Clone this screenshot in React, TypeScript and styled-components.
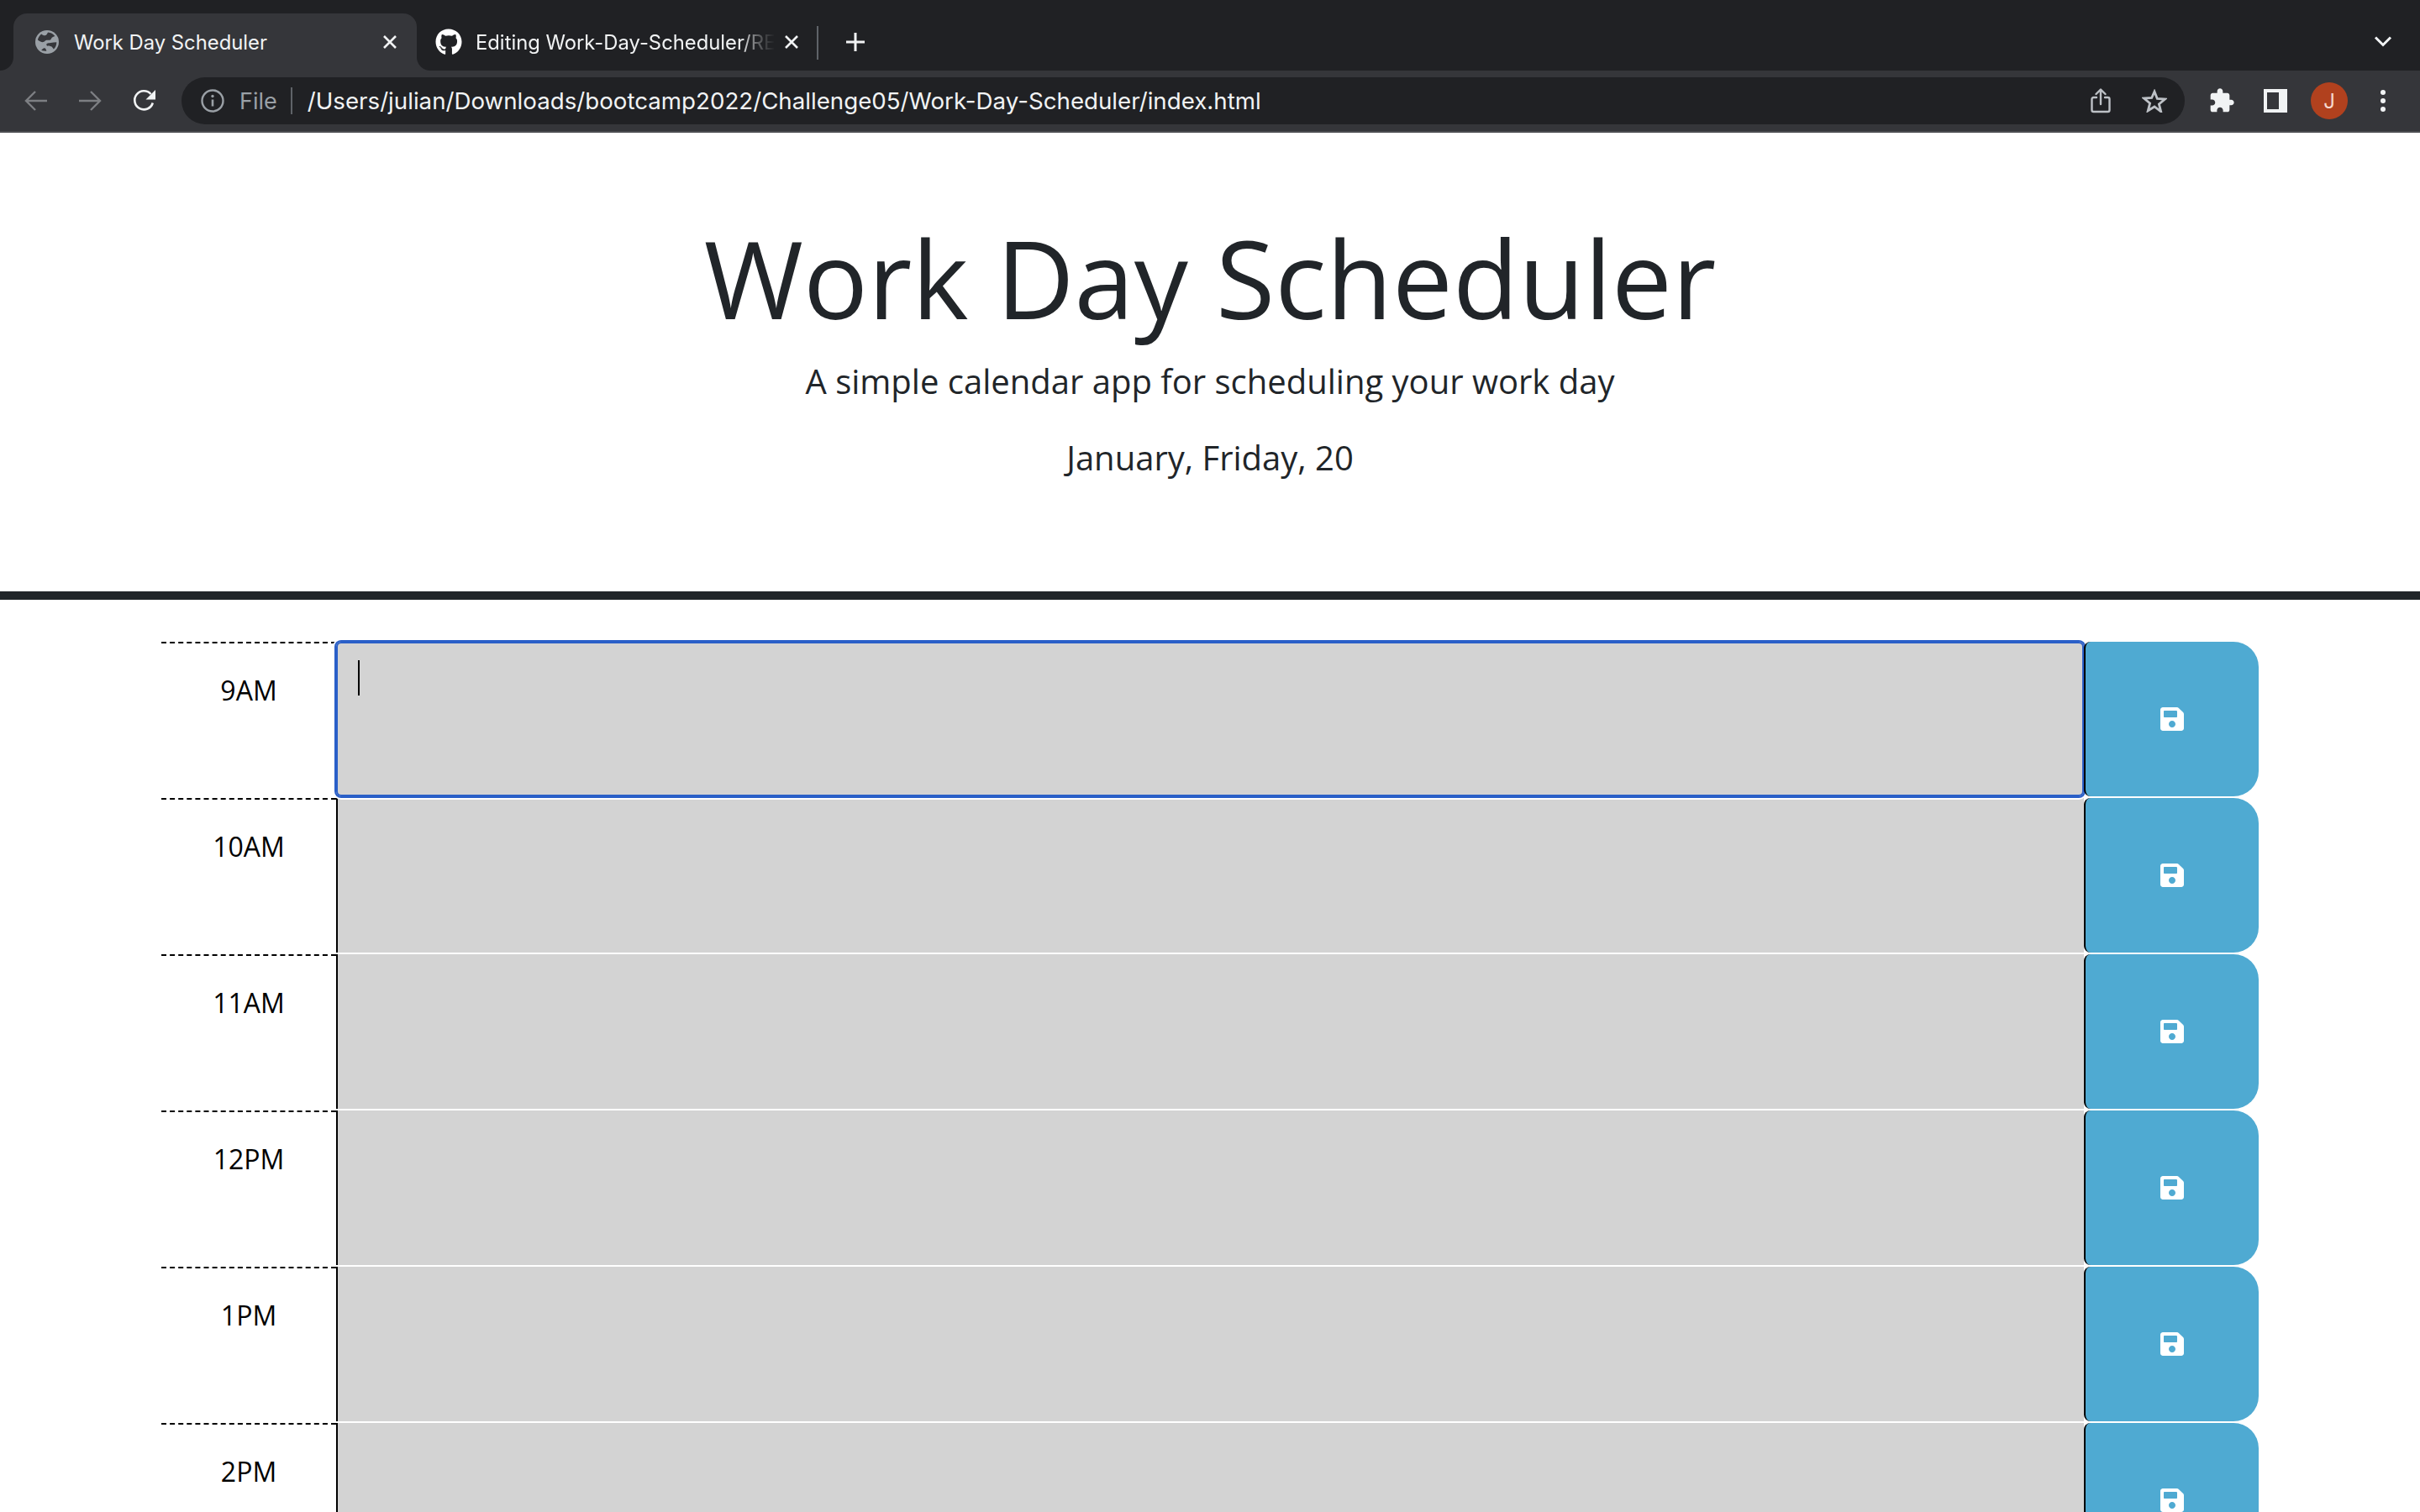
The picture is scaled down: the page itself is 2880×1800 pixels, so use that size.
import React from "react";
import styled, { createGlobalStyle } from "styled-components";
import { FaSave, FaGithub } from "react-icons/fa";

const Global = createGlobalStyle`
  html, body { margin: 0; padding: 0; height: 1800px; overflow: hidden; background: #fff; }
  * { box-sizing: border-box; }
`;

const Page = styled.div`
  width: 2880px;
  height: 1800px;
  overflow: hidden;
`;

const TabStrip = styled.div`
  height: 84px;
  background: #202124;
  display: flex;
  align-items: flex-end;
  padding-left: 16px;
  padding-right: 12px;
  font-family: Inter, "Liberation Sans", sans-serif;
  font-size: 23.8px;
  color: #f1f3f4;
`;

const ActiveTab = styled.div`
  position: relative;
  width: 480px;
  height: 68px;
  background: #35363a;
  border-radius: 16px 16px 0 0;
  display: flex;
  align-items: center;
  padding-left: 26px;
  &::before, &::after {
    content: "";
    position: absolute;
    bottom: 0;
    width: 16px;
    height: 16px;
  }
  &::before {
    left: -16px;
    background: radial-gradient(circle at 0 0, #202124 15.5px, #35363a 16.5px);
  }
  &::after {
    right: -16px;
    background: radial-gradient(circle at 100% 0, #202124 15.5px, #35363a 16.5px);
  }
`;

const IdleTab = styled.div`
  width: 476px;
  height: 68px;
  display: flex;
  align-items: center;
  padding-left: 24px;
`;

const Favicon = styled.span`
  width: 28px;
  height: 28px;
  flex: none;
  display: flex;
  color: #fff;
`;

const GithubMark = styled(FaGithub)`
  width: 32px;
  height: 32px;
  margin: -2px;
  flex: none;
`;

const TabTitle = styled.span<{ $fade?: boolean }>`
  width: 358px;
  margin-left: 18px;
  white-space: nowrap;
  overflow: hidden;
  flex: none;
  ${(p) =>
    p.$fade &&
    "mask-image: linear-gradient(to right, #000 calc(100% - 42px), rgba(0,0,0,0.35) calc(100% - 24px), transparent calc(100% - 2px));"}
`;

const CloseSlot = styled.span`
  width: 24px;
  height: 24px;
  flex: none;
  display: flex;
  margin-left: 6px;
`;

const TabDivider = styled.span`
  width: 2px;
  height: 40px;
  background: #5f6368;
  flex: none;
  margin-bottom: 13px;
`;

const NewTab = styled.span`
  width: 28px;
  height: 28px;
  flex: none;
  display: flex;
  margin: 0 0 20px 30px;
`;

const StripSpacer = styled.span`
  flex: 1;
`;

const TabListButton = styled.span`
  width: 24px;
  height: 24px;
  display: flex;
  flex: none;
  margin-right: 20px;
  margin-bottom: 22px;
`;

const Toolbar = styled.div`
  height: 74px;
  background: #35363a;
  border-bottom: 2px solid #4b4c50;
  display: flex;
  align-items: center;
  padding: 0 12px 0 11px;
  font-family: Inter, "Liberation Sans", sans-serif;
`;

const NavSlot = styled.span`
  width: 64px;
  height: 56px;
  flex: none;
  display: flex;
  align-items: center;
  justify-content: center;
`;

const ReloadSlot = styled(NavSlot)`
  padding-left: 2px;
`;

const Omnibox = styled.div`
  flex: 1;
  height: 56px;
  margin: 0 12px 0 13px;
  background: #202124;
  border-radius: 28px;
  display: flex;
  align-items: center;
  padding: 0 4px 0 23px;
`;

const SchemeLabel = styled.span`
  margin-left: 18px;
  font-size: 27px;
  color: #9aa0a6;
`;

const OmniDivider = styled.span`
  width: 2px;
  height: 32px;
  margin-left: 16px;
  background: #5f6368;
  flex: none;
`;

const Url = styled.span`
  margin-left: 18px;
  font-size: 27.7px;
  color: #f1f3f4;
  white-space: nowrap;
  flex: 1;
`;

const Avatar = styled.span`
  width: 44px;
  height: 44px;
  border-radius: 50%;
  background: #b1411e;
  color: #f6d9cf;
  font-size: 24px;
  display: flex;
  align-items: center;
  justify-content: center;
`;

const Hero = styled.header`
  height: 556px;
  border-bottom: 10px solid #212529;
  padding-top: 96px;
  text-align: center;
  font-family: "Open Sans", sans-serif;
  color: #212529;
`;

const Title = styled.h1`
  margin: 0 0 16px;
  font-size: 128px;
  line-height: 154px;
  font-weight: 400;
`;

const Lede = styled.p`
  margin: 0 0 31px;
  font-size: 40px;
  line-height: 60px;
  font-weight: 400;
`;

const Today = styled.p`
  margin: 0;
  font-size: 40px;
  line-height: 60px;
  font-weight: 400;
`;

const Schedule = styled.main`
  width: 2496px;
  margin: 50px auto 0;
  font-family: "Open Sans", sans-serif;
`;

const HourRow = styled.section`
  display: grid;
  grid-template-columns: 208px 2080px 208px;
  height: 186px;
`;

const HourLabel = styled.div`
  border-top: 2px dashed #000;
  padding-top: 32px;
  font-size: 32px;
  line-height: 48px;
  text-align: center;
  color: #000;
`;

const EventField = styled.div<{ $focused?: boolean }>`
  position: relative;
  height: 184px;
  background: #d3d3d3;
  border-left: 2px solid #000;
  padding: 22px 24px;
  ${(p) =>
    p.$focused &&
    `
    z-index: 1;
    border-left: 0;
    border-radius: 6px;
    padding-left: 26px;
    box-shadow: inset 0 0 0 2px #2a5fc8, 0 0 0 2px #2a5fc8, 0 0 0 4px #fff;
  `}
`;

const Caret = styled.span`
  display: block;
  width: 2px;
  height: 42px;
  background: #000;
`;

const SaveButton = styled.button`
  position: relative;
  z-index: 2;
  height: 184px;
  border: 0;
  border-left: 2px solid #000;
  border-radius: 8px 30px 30px 8px;
  background: #4faad2;
  color: #fff;
  padding: 0;
  display: flex;
  align-items: center;
  justify-content: center;
`;

const hours = ["9AM", "10AM", "11AM", "12PM", "1PM", "2PM"];

const Close = () => (
  <svg width="24" height="24" viewBox="0 0 24 24" fill="none" stroke="#f1f3f4" strokeWidth="2.6">
    <path d="M5 5l14 14M19 5L5 19" />
  </svg>
);

const Globe = () => (
  <svg width="28" height="28" viewBox="0 0 28 28">
    <circle cx="14" cy="14" r="14" fill="#9aa0a6" />
    <path
      fill="#35363a"
      d="M15 2.600c3.400.3 6.400 1.900 8.400 4.300-1.200.4-2.600.9-3.600 1.800-.9.9-.8 2.200-2 2.800-1.500.7-3.500-.3-5.100.4-1.300.6-2 2-3.400 2.200-1.700.2-3.500-.5-6.400-2.500.5-2.900 2.100-5.500 4.300-7.200 1.200 1 2.500 1.900 4.100 1.900 1.700-.1 2.800-1.200 3.700-3.700z"
    />
    <path
      fill="#35363a"
      d="M25.300 14.200c.1 3.300-1.300 6.300-3.500 8.400-.8-1.200-1.500-2.700-2.900-3.300-1.500-.7-3.300-.1-4.800-.9-1-.5-1.100-1.800-.3-2.500 1.200-1 3-.6 4.500-.9 2.400-.4 4.700-.7 7-.8z"
    />
    <path
      fill="#35363a"
      d="M7.200 24c1.100-1.300 2.100-2.900 3.800-2.800 1.300.1 1.700 1.600 2.400 3.500-2.300.1-4.400-.3-6.200-.7z"
    />
  </svg>
);

const Arrow = ({ flip }: { flip?: boolean }) => (
  <svg width="28" height="28" viewBox="0 0 28 28" fill="none" stroke="#7d7f83" strokeWidth="2.4">
    <path d={flip ? "M1 14h25M15 3l11 11-11 11" : "M27 14H2M13 3L2 14l11 11"} />
  </svg>
);

const Reload = () => (
  <svg width="28" height="28" viewBox="0 0 28 28" fill="none">
    <path d="M23.800 16.500A11 11 0 1 1 21.500 6" stroke="#f1f3f4" strokeWidth="2.6" />
    <path d="M27 1v11.500H15.500z" fill="#f1f3f4" />
  </svg>
);

const Info = () => (
  <svg width="28" height="28" viewBox="0 0 28 28" fill="none">
    <circle cx="14" cy="14" r="12.500" stroke="#9aa0a6" strokeWidth="2.4" />
    <path d="M14 12.500v8" stroke="#9aa0a6" strokeWidth="2.6" />
    <circle cx="14" cy="8.500" r="1.700" fill="#9aa0a6" />
  </svg>
);

const Share = () => (
  <svg width="24" height="30" viewBox="0 0 24 30" fill="none" stroke="#bdc1c6" strokeWidth="2.4" strokeLinecap="round" strokeLinejoin="round">
    <path d="M12 19V2M6.500 7L12 1.500 17.500 7" />
    <path d="M7 11H3.500A2 2 0 0 0 1.500 13v13a2 2 0 0 0 2 2h17a2 2 0 0 0 2-2V13a2 2 0 0 0-2-2H17" />
  </svg>
);

const Star = () => (
  <svg width="30" height="28" viewBox="0 0 30 28" fill="none" stroke="#bdc1c6" strokeWidth="2.8" strokeLinejoin="miter">
    <path d="M15 3l3.300 8.500 9.200.6-7.100 5.800 2.300 8.900L15 21l-7.700 4.800 2.300-8.900-7.100-5.800 9.200-.6z" />
  </svg>
);

const Puzzle = () => (
  <svg width="32" height="32" viewBox="0 0 24 24" fill="#f1f3f4">
    <path d="M20.500 11H19V7c0-1.100-.9-2-2-2h-4V3.500C13 2.120 11.880 1 10.500 1S8 2.120 8 3.500V5H4c-1.100 0-1.990.9-1.990 2v3.800H3.500c1.490 0 2.700 1.210 2.700 2.700s-1.210 2.700-2.700 2.700H2V20c0 1.100.9 2 2 2h3.800v-1.500c0-1.490 1.210-2.700 2.700-2.700 1.490 0 2.700 1.210 2.700 2.700V22H17c1.100 0 2-.9 2-2v-4h1.500c1.380 0 2.500-1.120 2.500-2.500S21.880 11 20.500 11z" />
  </svg>
);

const SidePanel = () => (
  <svg width="28" height="28" viewBox="0 0 28 28">
    <path fill="#f1f3f4" fillRule="evenodd" d="M0 0h28v28H0zM4 4v20h14V4z" />
  </svg>
);

const Kebab = () => (
  <svg width="8" height="28" viewBox="0 0 8 28" fill="#f1f3f4">
    <circle cx="4" cy="4" r="3" />
    <circle cx="4" cy="14" r="3" />
    <circle cx="4" cy="24" r="3" />
  </svg>
);

const Chevron = () => (
  <svg width="24" height="24" viewBox="0 0 24 24" fill="none" stroke="#f1f3f4" strokeWidth="3">
    <path d="M3 6.500l9 9 9-9" />
  </svg>
);

const Plus = () => (
  <svg width="28" height="28" viewBox="0 0 28 28" fill="none" stroke="#f1f3f4" strokeWidth="3">
    <path d="M14 3v22M3 14h22" />
  </svg>
);

export default function App() {
  return (
    <Page>
      <Global />
      <TabStrip>
        <ActiveTab>
          <Favicon><Globe /></Favicon>
          <TabTitle>Work Day Scheduler</TabTitle>
          <CloseSlot><Close /></CloseSlot>
        </ActiveTab>
        <IdleTab>
          <Favicon><GithubMark /></Favicon>
          <TabTitle $fade>Editing Work-Day-Scheduler/README.md at main</TabTitle>
          <CloseSlot><Close /></CloseSlot>
        </IdleTab>
        <TabDivider />
        <NewTab><Plus /></NewTab>
        <StripSpacer />
        <TabListButton><Chevron /></TabListButton>
      </TabStrip>
      <Toolbar>
        <NavSlot><Arrow /></NavSlot>
        <NavSlot><Arrow flip /></NavSlot>
        <ReloadSlot><Reload /></ReloadSlot>
        <Omnibox>
          <Info />
          <SchemeLabel>File</SchemeLabel>
          <OmniDivider />
          <Url>/Users/julian/Downloads/bootcamp2022/Challenge05/Work-Day-Scheduler/index.html</Url>
          <NavSlot><Share /></NavSlot>
          <NavSlot><Star /></NavSlot>
        </Omnibox>
        <NavSlot><Puzzle /></NavSlot>
        <NavSlot><SidePanel /></NavSlot>
        <NavSlot><Avatar>J</Avatar></NavSlot>
        <NavSlot><Kebab /></NavSlot>
      </Toolbar>
      <Hero>
        <Title>Work Day Scheduler</Title>
        <Lede>A simple calendar app for scheduling your work day</Lede>
        <Today>January, Friday, 20</Today>
      </Hero>
      <Schedule>
        {hours.map((hour, i) => (
          <HourRow key={hour}>
            <HourLabel>{hour}</HourLabel>
            <EventField $focused={i === 0}>{i === 0 && <Caret />}</EventField>
            <SaveButton aria-label={`Save ${hour}`}><FaSave size={32} /></SaveButton>
          </HourRow>
        ))}
      </Schedule>
    </Page>
  );
}
